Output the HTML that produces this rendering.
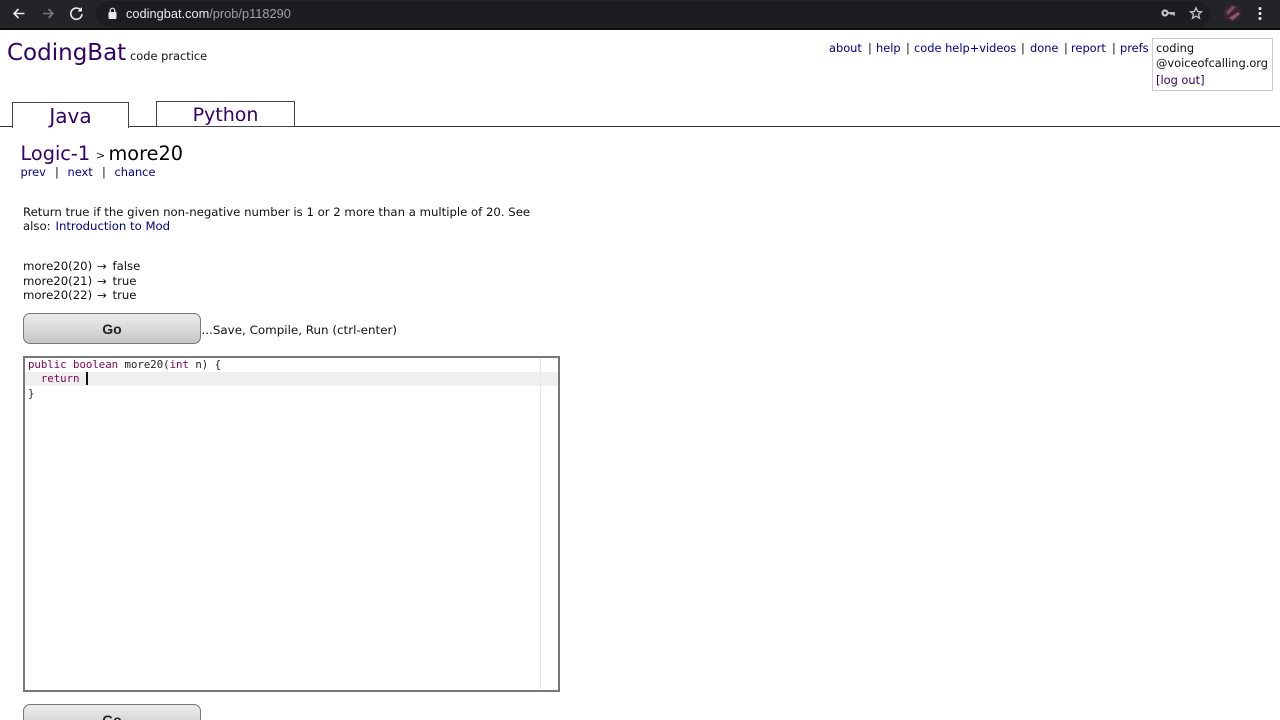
<!DOCTYPE html>
<html><head><meta charset="utf-8"><style>
html,body{margin:0;padding:0;background:#fff;width:1280px;height:720px;overflow:hidden}
body{font-family:"DejaVu Sans","Liberation Sans",sans-serif;font-size:11.7px;color:#111;position:relative}
.t{position:absolute;white-space:pre;line-height:14px}
a,.l{color:#00008b;text-decoration:none}
.p{color:#330066}
.n{font-size:11.4px;top:40.500px}
#bar{position:absolute;left:0;top:0;width:1280px;height:28px;background:#232427;border-bottom:2px solid #0c0c0d}
#url{position:absolute;left:96px;top:1px;width:1114px;height:26px;border-radius:13px;background:#1c1d20}
.go{position:absolute;left:23px;width:176px;height:29px;border:1px solid #777;border-radius:7px;background:linear-gradient(#ececec,#c6c6c6);font:bold 14px/31px "Liberation Sans",sans-serif;text-align:center;color:#222}
.tab{position:absolute;border:1px solid #444;background:#fff;box-sizing:border-box;text-align:center;color:#330066}
.code{position:absolute;font:10.7px "DejaVu Sans Mono","Liberation Mono",monospace;white-space:pre;line-height:14px;color:#222}
.k{color:#7f0055}
</style></head><body>
<div id="bar"><div id="url"></div>
<svg width="1280" height="28" style="position:absolute;left:0;top:0" fill="none">
<path d="M24.500 13.500H14M18.500 9L14 13.500L18.500 18" stroke="#e8eaed" stroke-width="1.600"/>
<path d="M43 13.500H53M48.500 9L53 13.500L48.500 18" stroke="#74767a" stroke-width="1.600"/>
<path d="M81 10.500A5.600 5.600 0 1 0 82 14" stroke="#e8eaed" stroke-width="1.600"/>
<path d="M82 7V11.500H77.500Z" fill="#e8eaed"/>
<rect x="108.500" y="12" width="8" height="7" rx="1" fill="#e8eaed"/>
<path d="M110.200 12V10.500a2.300 2.300 0 0 1 4.600 0V12" stroke="#e8eaed" stroke-width="1.200"/>
<circle cx="1165" cy="13" r="2.500" stroke="#c4c6c9" stroke-width="2.200"/>
<path d="M1167.500 13H1174V15.500M1171.500 13V15" stroke="#c4c6c9" stroke-width="1.800"/>
<path d="M1196 7.800L1197.600 11.500L1201.500 11.800L1198.500 14.300L1199.500 18.200L1196 16.100L1192.500 18.200L1193.500 14.300L1190.500 11.800L1194.400 11.500Z" stroke="#c4c6c9" stroke-width="1.300"/>
<circle cx="1232.500" cy="13" r="8.500" fill="#3a2530"/>
<path d="M1226 12L1232 6L1236 7L1228 15Z" fill="#7a4a60"/>
<path d="M1229 18L1238 12L1240 14L1233 20Z" fill="#90566f"/>
<circle cx="1260" cy="8.500" r="1.500" fill="#e8eaed"/><circle cx="1260" cy="13.500" r="1.500" fill="#e8eaed"/><circle cx="1260" cy="18.500" r="1.500" fill="#e8eaed"/>
</svg>
<div class="t" style="left:126px;top:6.500px;font:12.800px/14px 'Liberation Sans',sans-serif;color:#e8eaed">codingbat.com<span style="color:#9aa0a6">/prob/p118290</span></div>
</div>

<div class="t p" style="left:7px;top:39px;font-size:23px;line-height:28px">CodingBat</div>
<div class="t" style="left:130px;top:49px;font-size:11.400px">code practice</div>

<div class="t n" style="left:829px"><a>about</a></div>
<div class="t n" style="left:868px">|</div>
<div class="t n" style="left:876px"><a>help</a></div>
<div class="t n" style="left:906px">|</div>
<div class="t n" style="left:914px"><a>code help+videos</a></div>
<div class="t n" style="left:1021px">|</div>
<div class="t n" style="left:1030px"><a>done</a></div>
<div class="t n" style="left:1064px">|</div>
<div class="t n" style="left:1071px"><a>report</a></div>
<div class="t n" style="left:1112px">|</div>
<div class="t n" style="left:1120px"><a>prefs</a></div>
<div style="position:absolute;left:1152px;top:38px;width:119px;height:51px;border:1px solid #ccc"></div>
<div class="t" style="left:1156px;top:41px;font-size:11.400px">coding</div>
<div class="t" style="left:1156px;top:55.500px;font-size:11.400px">@voiceofcalling.org</div>
<div class="t p" style="left:1156px;top:73px;font-size:11.400px">[log out]</div>

<div style="position:absolute;left:0;top:126px;width:1280px;height:1px;background:#333"></div>
<div class="tab" style="left:12px;top:102px;width:117px;height:26px;border-bottom:none;line-height:26px;font-size:20px">Java</div>
<div class="tab" style="left:156px;top:101px;width:139px;height:26px;line-height:27px;font-size:19px">Python</div>

<div class="t p" style="left:20.500px;top:143px;font-size:19.300px;line-height:22px">Logic-1</div>
<div class="t" style="left:96px;top:149px;font-size:11px">&gt;</div>
<div class="t" style="left:108.500px;top:143px;font-size:19.300px;line-height:22px;color:#000">more20</div>
<div class="t" style="left:20.500px;top:165px;font-size:11.400px"><a>prev</a></div>
<div class="t" style="left:55px;top:165px;font-size:11.400px">|</div>
<div class="t" style="left:67.500px;top:165px;font-size:11.400px"><a>next</a></div>
<div class="t" style="left:102px;top:165px;font-size:11.400px">|</div>
<div class="t" style="left:114.500px;top:165px;font-size:11.400px"><a>chance</a></div>

<div class="t" style="left:23px;top:205px">Return true if the given non-negative number is 1 or 2 more than a multiple of 20. See</div>
<div class="t" style="left:23px;top:219px">also:</div><div class="t" style="left:55.500px;top:219px"><a>Introduction to Mod</a></div>
<div class="t" style="left:23px;top:259px">more20(20)</div><div class="t" style="left:97px;top:259px">→</div><div class="t" style="left:112.500px;top:259px">false</div>
<div class="t" style="left:23px;top:273.500px">more20(21)</div><div class="t" style="left:97px;top:273.500px">→</div><div class="t" style="left:112.500px;top:273.500px">true</div>
<div class="t" style="left:23px;top:288px">more20(22)</div><div class="t" style="left:97px;top:288px">→</div><div class="t" style="left:112.500px;top:288px">true</div>

<div class="go" style="top:313px">Go</div>
<div class="t" style="left:201.500px;top:322.500px;font-size:11.900px">...Save, Compile, Run (ctrl-enter)</div>

<div style="position:absolute;left:23px;top:355.500px;width:533px;height:332px;border:2px solid #777;background:#fff"></div>
<div style="position:absolute;left:25px;top:372px;width:533px;height:14px;background:#efefef"></div>
<div style="position:absolute;left:540px;top:358px;width:1px;height:331px;background:#e6e6e6"></div>
<div class="code" style="left:28px;top:358px"><span class="k">public boolean</span> more20(<span class="k">int</span> n) {</div>
<div class="code" style="left:28px;top:372px">  <span class="k">return</span> </div>
<div style="position:absolute;left:86px;top:372px;width:2px;height:13px;background:#111"></div>
<div class="code" style="left:28px;top:386.500px">}</div>

<div class="go" style="top:704px">Go</div>
</body></html>
